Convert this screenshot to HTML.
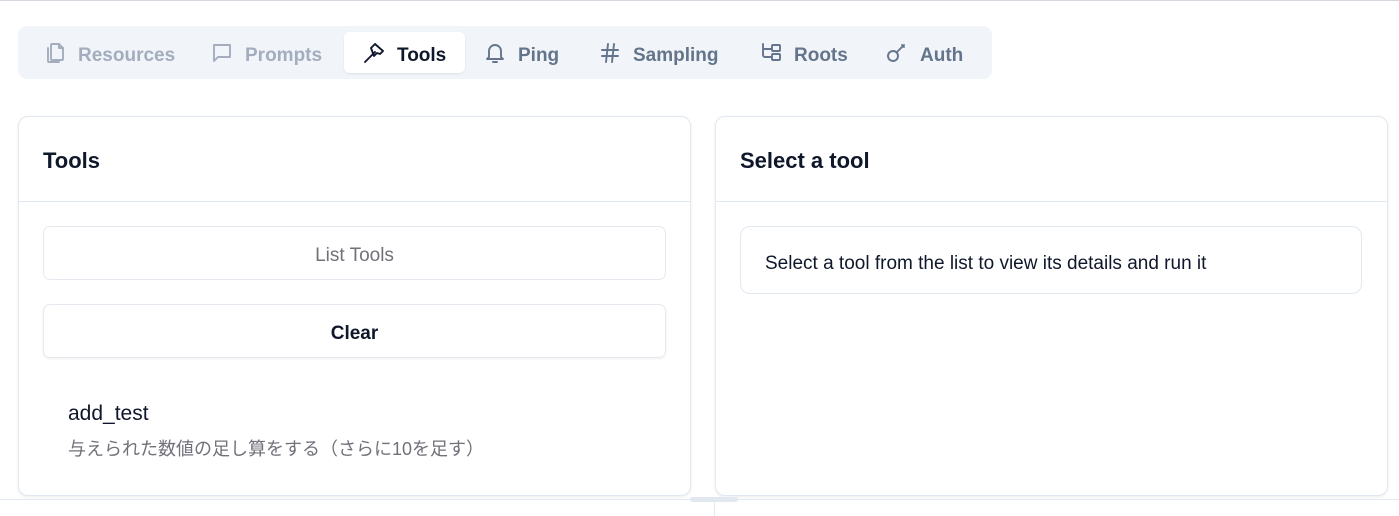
<!DOCTYPE html>
<html><head><meta charset="utf-8"><style>
*{box-sizing:border-box;margin:0;padding:0}
body{width:1399px;height:516px;background:#fff;font-family:"Liberation Sans","Noto Sans CJK JP",sans-serif;position:relative;overflow:hidden}
.topl{position:absolute;left:0;top:0;width:1399px;height:1px;background:#d4d8de}
.tabs{position:absolute;left:18px;top:26px;width:974px;height:53px;background:#f1f5f9;border-radius:9px}
.tab{position:absolute;top:6px;height:41px;display:flex;align-items:center;font-size:19px;font-weight:bold;color:#64748b;padding-top:6px}
.tab svg{width:24px;height:24px;margin-right:11px;margin-top:-6px;fill:none;stroke:currentColor;stroke-width:1.9;stroke-linecap:round;stroke-linejoin:round}
.tab.dis{color:#a3adbd}
.tab.act{background:#fff;color:#0f172a;border-radius:6px;box-shadow:0 1px 2px rgba(0,0,0,.08);padding-left:18px}
.card{position:absolute;top:116px;height:380px;border:1px solid #e2e8f0;border-radius:10px;background:#fff;box-shadow:0 1px 3px rgba(0,0,0,.08)}
.hd{height:85px;border-bottom:1px solid #e2e8f0;padding-left:24px;font-size:22px;font-weight:bold;color:#0f172a;line-height:88px}
.btn{position:absolute;left:24px;width:623px;height:54px;border:1px solid #e5e9ef;border-radius:7px;text-align:center;line-height:57px;font-size:19px}
</style></head><body>
<div class="topl"></div>
<div class="tabs">
 <div class="tab dis" style="left:25px"><svg viewBox="0 0 24 24"><path d="M9 3h7l4 4v11a1 1 0 0 1-1 1H9a1 1 0 0 1-1-1V4a1 1 0 0 1 1-1z"/><path d="M16 3v4h4"/><path d="M5 7v13a1 1 0 0 0 1 1h10"/></svg>Resources</div>
 <div class="tab dis" style="left:192px"><svg viewBox="0 0 24 24"><path d="M4 4h16v12H8l-4 4z"/></svg>Prompts</div>
 <div class="tab act" style="left:326px;width:121px"><svg viewBox="0 0 24 24"><path d="M3 21l10-10"/><path d="M9 7l4-4 8 7-3 3-3-1-3 3z"/></svg>Tools</div>
 <div class="tab" style="left:465px"><svg viewBox="0 0 24 24"><path d="M6 16V10a6 6 0 0 1 12 0v6l2 2H4z"/><path d="M10 21h4"/></svg>Ping</div>
 <div class="tab" style="left:580px"><svg viewBox="0 0 24 24"><path d="M4 9h16M4 15h16M10 3L8 21M16 3l-2 18"/></svg>Sampling</div>
 <div class="tab" style="left:741px"><svg viewBox="0 0 24 24"><path d="M4 3v11a2 2 0 0 0 2 2h6M4 8h8"/><rect x="13" y="4" width="8" height="6" rx="1"/><rect x="13" y="13" width="8" height="6" rx="1"/></svg>Roots</div>
 <div class="tab" style="left:867px"><svg viewBox="0 0 24 24"><circle cx="8" cy="15" r="5"/><path d="M12 11l7-7M17 4l2 2"/></svg>Auth</div>
</div>
<div class="card" style="left:18px;width:673px">
 <div class="hd">Tools</div>
 <div class="btn" style="top:109px;color:#71717a">List Tools</div>
 <div class="btn" style="top:187px;color:#0f172a;font-weight:bold;box-shadow:0 1px 2px rgba(0,0,0,.06)">Clear</div>
 <div style="position:absolute;left:49px;top:285px;font-size:21px;color:#0f172a">add_test</div>
 <div style="position:absolute;left:49px;top:318px;font-size:18px;color:#71717a">与えられた数値の足し算をする（さらに10を足す）</div>
</div>
<div class="card" style="left:715px;width:673px">
 <div class="hd">Select a tool</div>
 <div style="position:absolute;left:24px;top:109px;width:622px;height:68px;border:1px solid #e2e8f0;border-radius:10px;padding-left:24px;line-height:73px;font-size:19px;color:#0f172a">Select a tool from the list to view its details and run it</div>
</div>
<div style="position:absolute;left:0;top:499px;width:1399px;height:1px;background:#e2e8f0"></div>
<div style="position:absolute;left:690px;top:497px;width:48px;height:5px;border-radius:3px;background:#e2e8f0"></div>
<div style="position:absolute;left:714px;top:500px;width:1px;height:16px;background:#e2e8f0"></div>
</body></html>
